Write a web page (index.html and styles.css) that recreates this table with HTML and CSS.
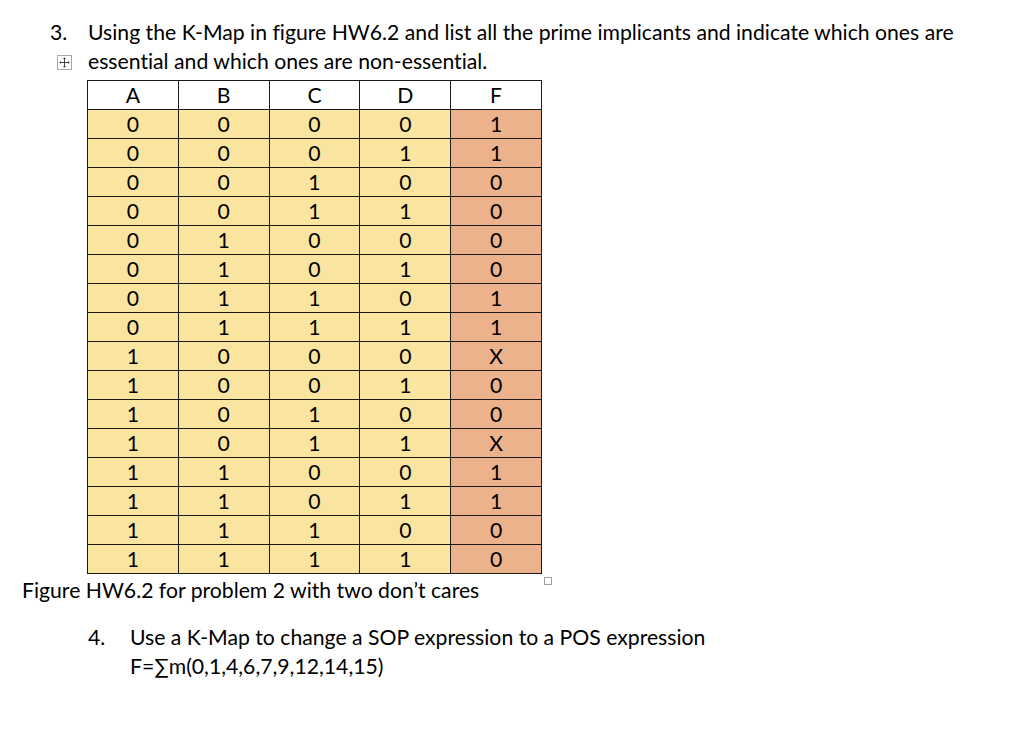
FILE: index.html
```html
<!DOCTYPE html>
<html>
<head>
<meta charset="utf-8">
<link rel="stylesheet" href="styles.css">
</head>
<body>
<div class="page">
  <div class="q q3">
    <span class="num">3.</span>
    <p class="qtext">Using the K-Map in figure HW6.2 and list all the prime implicants and indicate which ones are<br>essential and which ones are non-essential.</p>
  </div>
  <div class="table-wrap">
    <span class="move-handle">
      <svg width="15" height="15" viewBox="0 0 15 15">
        <rect x="0.5" y="0.5" width="14" height="14" fill="#fff" stroke="#a8a8a8"/>
        <path d="M7.5 3v9M3 7.5h9" stroke="#444" stroke-width="1"/>
        <path d="M7.5 2.2l-1.6 1.8h3.2zM7.5 12.8l-1.6-1.8h3.2zM2.2 7.5l1.8-1.6v3.2zM12.8 7.5l-1.8-1.6v3.2z" fill="#444"/>
      </svg>
    </span>
    <table class="truth">
      <thead>
        <tr><th>A</th><th>B</th><th>C</th><th>D</th><th>F</th></tr>
      </thead>
      <tbody>
        <tr><td>0</td><td>0</td><td>0</td><td>0</td><td class="f">1</td></tr>
        <tr><td>0</td><td>0</td><td>0</td><td>1</td><td class="f">1</td></tr>
        <tr><td>0</td><td>0</td><td>1</td><td>0</td><td class="f">0</td></tr>
        <tr><td>0</td><td>0</td><td>1</td><td>1</td><td class="f">0</td></tr>
        <tr><td>0</td><td>1</td><td>0</td><td>0</td><td class="f">0</td></tr>
        <tr><td>0</td><td>1</td><td>0</td><td>1</td><td class="f">0</td></tr>
        <tr><td>0</td><td>1</td><td>1</td><td>0</td><td class="f">1</td></tr>
        <tr><td>0</td><td>1</td><td>1</td><td>1</td><td class="f">1</td></tr>
        <tr><td>1</td><td>0</td><td>0</td><td>0</td><td class="f">X</td></tr>
        <tr><td>1</td><td>0</td><td>0</td><td>1</td><td class="f">0</td></tr>
        <tr><td>1</td><td>0</td><td>1</td><td>0</td><td class="f">0</td></tr>
        <tr><td>1</td><td>0</td><td>1</td><td>1</td><td class="f">X</td></tr>
        <tr><td>1</td><td>1</td><td>0</td><td>0</td><td class="f">1</td></tr>
        <tr><td>1</td><td>1</td><td>0</td><td>1</td><td class="f">1</td></tr>
        <tr><td>1</td><td>1</td><td>1</td><td>0</td><td class="f">0</td></tr>
        <tr><td>1</td><td>1</td><td>1</td><td>1</td><td class="f">0</td></tr>
      </tbody>
    </table>
    <span class="resize-handle"></span>
  </div>
  <p class="caption">Figure HW6.2 for problem 2 with two don’t cares</p>
  <div class="q q4">
    <span class="num">4.</span>
    <p class="qtext">Use a K-Map to change a SOP expression to a POS expression<br>F=∑m(0,1,4,6,7,9,12,14,15)</p>
  </div>
</div>
</body>
</html>
```
FILE: styles.css
```css
html, body {
  margin: 0;
  padding: 0;
  background: #fff;
}
body {
  font-family: Lato, "Open Sans", sans-serif;
  font-size: 21.2px;
  font-variant-ligatures: none;
  color: #000;
}
.page {
  padding: 18px 0 0 22px;
  width: 1002px;
  box-sizing: border-box;
}
.q {
  display: flex;
}
.q p {
  margin: 0;
}
.q3 {
  padding-left: 28px;
  line-height: 29px;
}
.q3 .num {
  width: 38px;
  flex: none;
}
.q3 .qtext {
  white-space: nowrap;
}
.table-wrap {
  position: relative;
  margin-left: 65px;
  margin-top: 4px;
  width: 455px;
}
.move-handle {
  position: absolute;
  left: -30px;
  top: -25px;
  width: 15px;
  height: 15px;
  line-height: 0;
}
.resize-handle {
  position: absolute;
  right: -10px;
  bottom: -11px;
  width: 6px;
  height: 6px;
  border: 1px solid #a0a0a0;
  background: #fff;
}
.truth {
  border-collapse: collapse;
  table-layout: fixed;
  width: 455px;
}
.truth th, .truth td {
  border: 1.5px solid #1a1a1a;
  height: 29px;
  padding: 0;
  text-align: center;
  font-weight: normal;
  box-sizing: border-box;
  line-height: 27px;
}
.truth td {
  background: #fae5a0;
}
.truth td.f {
  background: #ebb28c;
}
.truth th {
  background: #fff;
}
.caption {
  margin: 3px 0 0 0;
  line-height: 26px;
}
.q4 {
  padding-left: 66px;
  margin-top: 20px;
  line-height: 29px;
}
.q4 .num {
  width: 42px;
  flex: none;
}
```
